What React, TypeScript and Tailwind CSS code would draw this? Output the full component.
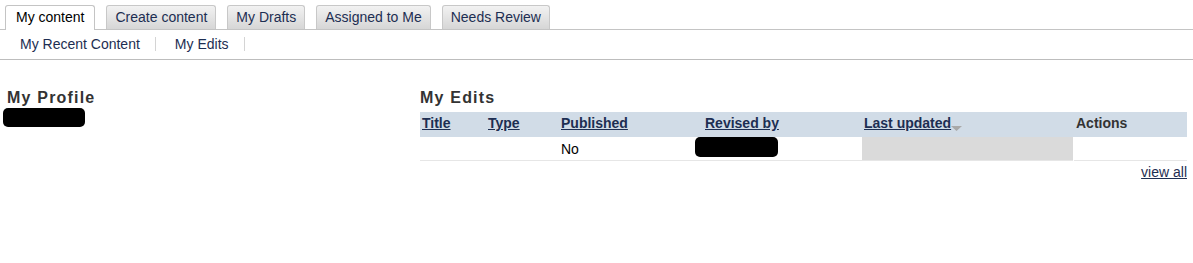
import React from "react";

const tabs = ["My content", "Create content", "My Drafts", "Assigned to Me", "Needs Review"];

export default function App() {
  return (
    <div className="w-[1193px] h-[263px] bg-white text-[14px] leading-none text-[#1d2e52]" style={{ fontFamily: '"Liberation Sans", Arial, sans-serif' }}>
      {/* Primary tabs */}
      <div className="flex items-end gap-[11px] pl-[5px] pt-[5px] border-b border-[#c4c4c4]">
        {tabs.map((t, i) =>
          i === 0 ? (
            <div key={t} className="h-[25px] -mb-px px-[10px] pb-[3px] flex items-center bg-white border border-b-0 border-[#c4c4c4] rounded-t-[3px] text-black">
              {t}
            </div>
          ) : (
            <div key={t} className="h-[24px] px-[8px] pb-[2px] flex items-center bg-gradient-to-b from-[#f2f2f2] to-[#d6d6d6] border border-b-0 border-[#c8c8c8] rounded-t-[3px] text-[#1d2e52]">
              {t}
            </div>
          )
        )}
      </div>
      {/* Secondary tabs */}
      <div className="flex items-center h-[30px] pl-[1px] pb-[2px] border-b border-[#bdbdbd]">
        <span className="pl-[19px] pr-[15px]">My Recent Content</span>
        <span className="w-px h-[14px] bg-[#d4d4d4]"></span>
        <span className="pl-[19px] pr-[15px]">My Edits</span>
        <span className="w-px h-[14px] bg-[#d4d4d4]"></span>
      </div>
      {/* Content */}
      <div className="flex pt-[29px]">
        <div className="w-[420px] pl-[3px]">
          <h2 className="pl-[4px] text-[16px] font-bold tracking-[1.2px] text-[#333] leading-[18px]">My Profile</h2>
          <div className="mt-[1px] w-[82px] h-[19px] bg-black rounded-[5px]"></div>
        </div>
        <div className="w-[767px]">
          <h2 className="text-[16px] font-bold tracking-[1.2px] text-[#333] leading-[18px]">My Edits</h2>
          <div className="mt-[5px] grid grid-cols-[66px_73px_144px_159px_212px_113px]">
            <div className="h-[25px] bg-[#d1dce7] pl-[2px] pb-[3px] flex items-center font-bold underline">Title</div>
            <div className="h-[25px] bg-[#d1dce7] pl-[2px] pb-[3px] flex items-center font-bold underline">Type</div>
            <div className="h-[25px] bg-[#d1dce7] pl-[2px] pb-[3px] flex items-center font-bold underline">Published</div>
            <div className="h-[25px] bg-[#d1dce7] pl-[2px] pb-[3px] flex items-center font-bold underline">Revised by</div>
            <div className="h-[25px] bg-[#d1dce7] pl-[2px] pb-[3px] flex items-center font-bold">
              <span className="underline">Last updated</span>
              <svg width="11" height="6" viewBox="0 0 11 6" className="mt-[12px]">
                <polygon points="0,0 11,0 5.5,5" fill="#a9a9a9" />
              </svg>
            </div>
            <div className="h-[25px] bg-[#d1dce7] pl-[2px] pb-[3px] flex items-center font-bold text-[#333]">Actions</div>

            <div className="h-[24px] border-b border-[#e6e6e6]"></div>
            <div className="h-[24px] border-b border-[#e6e6e6]"></div>
            <div className="h-[24px] border-b border-[#e6e6e6] pl-[2px] pt-[1px] flex items-center text-black">No</div>
            <div className="h-[24px] border-b border-[#e6e6e6] flex items-start">
              <div className="ml-[-8px] w-[83px] h-[20px] bg-black rounded-[5px]"></div>
            </div>
            <div className="h-[24px] border-b border-[#e6e6e6] bg-[#dadada] mr-[1px]"></div>
            <div className="h-[24px] border-b border-[#e6e6e6]"></div>
          </div>
          <div className="flex justify-end mt-[4px]">
            <span className="underline text-[#1d2e52]">view all</span>
          </div>
        </div>
      </div>
    </div>
  );
}
